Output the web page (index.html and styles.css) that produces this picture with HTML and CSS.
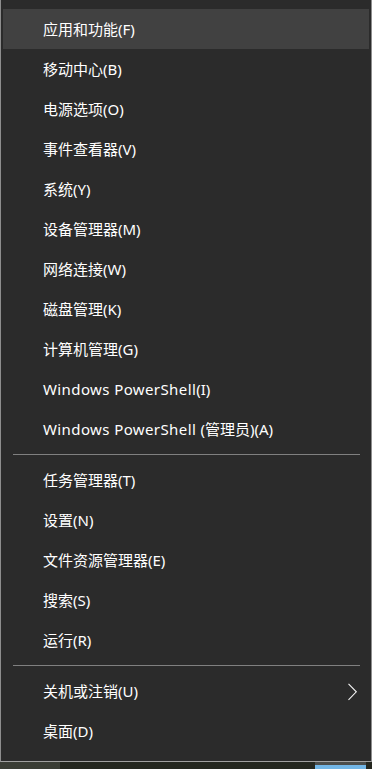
FILE: index.html
```html
<!DOCTYPE html>
<html lang="zh-CN">
<head>
<meta charset="utf-8">
<title>Win+X</title>
<link rel="stylesheet" href="styles.css">
</head>
<body>
<div class="menu">
  <div class="group">
    <div class="item hover">应用和功能(F)</div>
    <div class="item">移动中心(B)</div>
    <div class="item">电源选项(O)</div>
    <div class="item">事件查看器(V)</div>
    <div class="item">系统(Y)</div>
    <div class="item">设备管理器(M)</div>
    <div class="item">网络连接(W)</div>
    <div class="item">磁盘管理(K)</div>
    <div class="item">计算机管理(G)</div>
    <div class="item"><span><span class="lat">Windows PowerShell</span>(I)</span></div>
    <div class="item"><span><span class="lat">Windows PowerShell </span>(管理员)(A)</span></div>
  </div>
  <div class="sep"></div>
  <div class="group">
    <div class="item">任务管理器(T)</div>
    <div class="item">设置(N)</div>
    <div class="item">文件资源管理器(E)</div>
    <div class="item">搜索(S)</div>
    <div class="item">运行(R)</div>
  </div>
  <div class="sep"></div>
  <div class="group">
    <div class="item sub"><span>关机或注销(U)</span>
      <svg class="chev" width="11" height="18" viewBox="0 0 11 18"><path d="M1.5 0.8 L9.3 8.8 L1.5 16.8" fill="none" stroke="#f4f4f4" stroke-width="1.1"/></svg>
    </div>
    <div class="item">桌面(D)</div>
  </div>
</div>
<div class="desktop">
  <div class="d1"></div>
  <div class="d2"></div>
  <div class="d3"><div class="d3top"></div><div class="d3blue"></div></div>
  <div class="d4"></div>
</div>
</body>
</html>
```
FILE: styles.css
```css
html, body {
  margin: 0;
  padding: 0;
  background: #24271f;
}
body {
  width: 372px;
  height: 769px;
  overflow: hidden;
  font-family: "Noto Sans", "Noto Sans CJK SC", sans-serif;
}
.menu {
  box-sizing: border-box;
  width: 372px;
  height: 762px;
  background: #2b2b2b;
  border-left: 1px solid #8e8e8e;
  border-right: 1px solid #8e8e8e;
  border-bottom: 1px solid #a0a0a0;
  padding: 9px 0 10px 0;
  display: flex;
  flex-direction: column;
}
.group {
  display: flex;
  flex-direction: column;
}
.item {
  height: 40px;
  display: flex;
  align-items: center;
  justify-content: space-between;
  padding-left: 40px;
  padding-right: 11px;
  margin: 0 2px;
  color: #ffffff;
  font-size: 15px;
  line-height: 20px;
}
.lat {
  letter-spacing: 0.4px;
  white-space: pre;
}
.item.hover {
  background: #414141;
}
.chev {
  display: block;
  margin-top: 1px;
}
.sep {
  height: 1px;
  background: #808080;
  margin: 5px 11px 5px 12px;
}
.desktop {
  display: flex;
  height: 7px;
}
.d1 { width: 60px; background: #3a3d35; }
.d2 { width: 255px; background: #24271f; }
.d3 { width: 51px; display: flex; flex-direction: column; }
.d3top { height: 3px; background: #4b4d4b; }
.d3blue { flex: 1; background: #72b6e6; }
.d4 { flex: 1; background: #24271f; }
```
